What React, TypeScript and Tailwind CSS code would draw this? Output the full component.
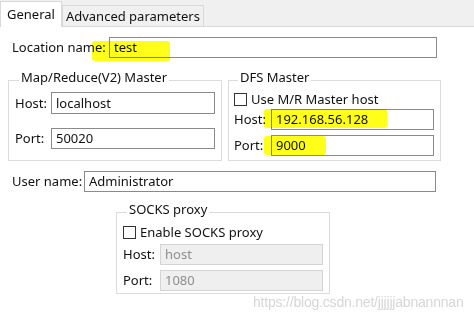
import React from "react";

const font = { fontFamily: '"Noto Sans", "Open Sans", sans-serif' };

function Field({ value, className, disabled }: { value: string; className: string; disabled?: boolean }) {
  return (
    <div
      className={
        "flex items-center shrink-0 pl-[4px] border " +
        (disabled ? "bg-[#efefef] border-[#d4d4d4] text-[#8e8e8e] " : "bg-white border-[#8a8a8a] text-[#111] ") +
        className
      }
    >
      {value}
    </div>
  );
}

function Check({ label }: { label: string }) {
  return (
    <div className="flex items-center gap-[4px] h-[16px]">
      <span className="w-[13px] h-[13px] border border-[#333] bg-white" />
      <span>{label}</span>
    </div>
  );
}

export default function App() {
  return (
    <div
      className="relative w-[474px] h-[317px] bg-white overflow-hidden text-[13px] leading-none text-[#111] whitespace-nowrap"
      style={font}
    >
      {/* tabs */}
      <div className="h-[27px] bg-[#f0f0f0] border-b border-[#d9d9d9] flex items-end">
        <div className="h-[26px] -mb-px bg-white border border-b-0 border-[#d9d9d9] px-[6px] flex items-center">
          General
        </div>
        <div className="h-[21px] border border-b-0 border-[#d9d9d9] px-[3px] flex items-center">
          Advanced parameters
        </div>
      </div>

      {/* location */}
      <div className="flex items-center mt-[10px] pl-[12px] h-[21px]">
        <span className="w-[97px] shrink-0">Location name:</span>
        <Field value="test" className="w-[328px] h-[21px]" />
      </div>

      {/* masters */}
      <div className="flex gap-[6px] pl-[8px] mt-[13px]">
        <fieldset className="w-[213px] h-[90px] border border-[#dcdcdc] px-[6px]">
          <legend className="px-[2px] ml-[4px] h-[18px]">Map/Reduce(V2) Master</legend>
          <div className="flex items-center mt-[3px]">
            <span className="w-[36px] shrink-0">Host:</span>
            <Field value="localhost" className="w-[164px] h-[22px]" />
          </div>
          <div className="flex items-center mt-[14px]">
            <span className="w-[36px] shrink-0">Port:</span>
            <Field value="50020" className="w-[164px] h-[21px]" />
          </div>
        </fieldset>
        <fieldset className="w-[213px] h-[90px] border border-[#dcdcdc] px-[5px]">
          <legend className="px-[2px] ml-[4px] h-[18px]">DFS Master</legend>
          <div className="mt-[2px]">
            <Check label="Use M/R Master host" />
          </div>
          <div className="flex items-center mt-[2px]">
            <span className="w-[37px] shrink-0">Host:</span>
            <Field value="192.168.56.128" className="w-[163px] h-[21px]" />
          </div>
          <div className="flex items-center mt-[5px]">
            <span className="w-[37px] shrink-0">Port:</span>
            <Field value="9000" className="w-[163px] h-[21px]" />
          </div>
        </fieldset>
      </div>

      {/* user */}
      <div className="flex items-center mt-[10px] pl-[12px] h-[21px]">
        <span className="w-[72px] shrink-0">User name:</span>
        <Field value="Administrator" className="w-[352px] h-[21px]" />
      </div>

      {/* socks */}
      <div className="pl-[116px] mt-[11px]">
        <fieldset className="w-[214px] h-[91px] border border-[#dcdcdc] px-[6px]">
          <legend className="px-[2px] ml-[4px] h-[18px]">SOCKS proxy</legend>
          <div className="mt-[3px]">
            <Check label="Enable SOCKS proxy" />
          </div>
          <div className="flex items-center mt-[4px]">
            <span className="w-[37px] shrink-0">Host:</span>
            <Field value="host" disabled className="w-[163px] h-[21px]" />
          </div>
          <div className="flex items-center mt-[5px]">
            <span className="w-[37px] shrink-0">Port:</span>
            <Field value="1080" disabled className="w-[163px] h-[21px]" />
          </div>
        </fieldset>
      </div>

      <div className="pl-[253px] mt-[1px] text-[#d6d6d6] text-[14px] tracking-[-0.2px]" style={{ fontFamily: '"Liberation Sans", sans-serif' }}>
        https://blog.csdn.net/jjjjjjabnannnan
      </div>

      {/* highlighter marks */}
      <span className="absolute left-[92px] top-[41px] w-[78px] h-[20px] rounded-[3px] bg-[#ffff00] mix-blend-multiply opacity-90" />
      <span className="absolute left-[264px] top-[109px] w-[123px] h-[19px] rounded-[3px] bg-[#ffff00] mix-blend-multiply opacity-90" />
      <span className="absolute left-[264px] top-[136px] w-[62px] h-[19px] rounded-[3px] bg-[#ffff00] mix-blend-multiply opacity-90" />
    </div>
  );
}
